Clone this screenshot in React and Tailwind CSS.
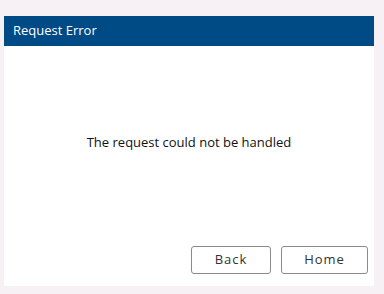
export default function App() {
  return (
    <div className="w-[384px] h-[294px] bg-[#f7f1f6] pt-[16px] pl-[4px]" style={{ fontFamily: '"Open Sans", "Noto Sans", sans-serif' }}>
      <div className="w-[370px] h-[270px] bg-white flex flex-col">
        <div className="h-[30px] bg-[#004a85] text-white text-[13px] flex items-center pl-[9px]">
          Request Error
        </div>
        <div className="flex-1 flex items-center justify-center text-[13px] text-[#111] pb-[6px]">
          The request could not be handled
        </div>
        <div className="flex justify-end gap-[10px] pr-[6px] pb-[12px]">
          <button className="w-[80px] h-[28px] border border-[#8a8a8a] rounded-[3px] text-[13px] tracking-[1px] text-[#333]">Back</button>
          <button className="w-[87px] h-[28px] border border-[#8a8a8a] rounded-[3px] text-[13px] tracking-[1px] text-[#333]">Home</button>
        </div>
      </div>
    </div>
  );
}
